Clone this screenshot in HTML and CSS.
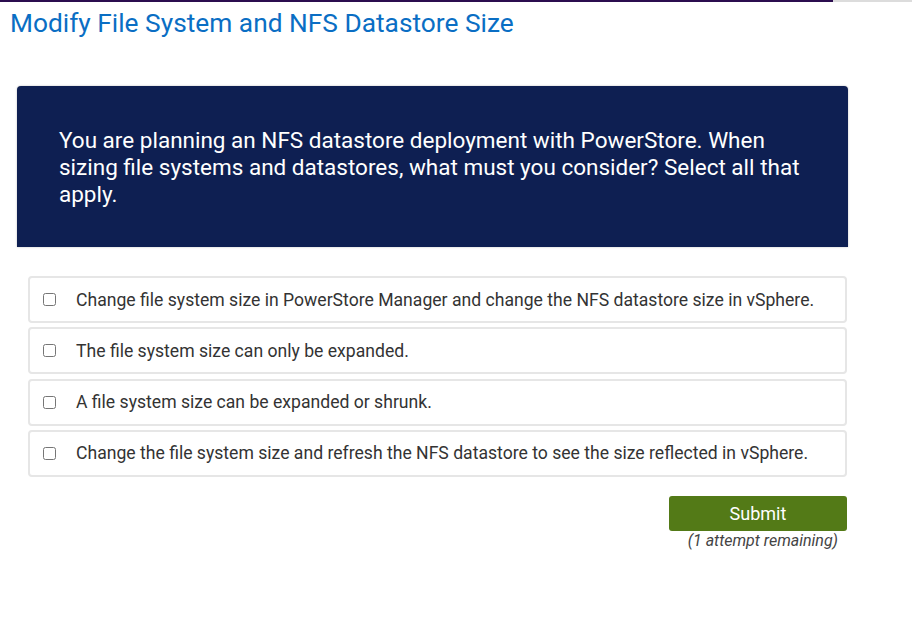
FILE: index.html
```html
<!DOCTYPE html>
<html lang="en">
   <head>
      <meta charset="utf-8" />
      <title>Modify File System and NFS Datastore Size</title>
      <link rel="stylesheet" href="styles.css">
   </head>
   <body>
      <div class="progress"><div class="progress-fill"></div></div>

      <h1 class="title">Modify File System and NFS Datastore Size</h1>

      <div class="question">
         You are planning an NFS datastore deployment with PowerStore. When sizing file systems and datastores, what must you consider? Select all that apply.
      </div>

      <form class="answers">
         <label class="option"><input type="checkbox" name="a1" /><span>Change file system size in PowerStore Manager and change the NFS datastore size in vSphere.</span></label>
         <label class="option"><input type="checkbox" name="a2" /><span>The file system size can only be expanded.</span></label>
         <label class="option"><input type="checkbox" name="a3" /><span>A file system size can be expanded or shrunk.</span></label>
         <label class="option"><input type="checkbox" name="a4" /><span>Change the file system size and refresh the NFS datastore to see the size reflected in vSphere.</span></label>

         <div class="submit-area">
            <button type="submit" class="submit">Submit</button>
            <div class="attempts">(1 attempt remaining)</div>
         </div>
      </form>
   </body>
</html>
```

FILE: styles.css
```css
body {
   margin: 0;
   font-family: Roboto, 'Liberation Sans', sans-serif;
   background-color: #ffffff;
}

.progress {
   height: 2px;
   background-color: #dcdcdc;
}

.progress-fill {
   width: 833px;
   height: 2px;
   background-color: #2b0d4f;
}

.title {
   margin: 6px 0 0 10px;
   font-size: 26.3px;
   font-weight: 400;
   line-height: 30px;
   color: #0a6ec4;
}

.question {
   margin: 48px 0 0 17px;
   width: 831px;
   box-sizing: border-box;
   padding: 41px 42px 39px 42px;
   background-color: #0e1f52;
   border-radius: 4px 4px 0 0;
   box-shadow: 0 0 2px #b5b5b5;
   color: #ffffff;
   font-size: 22.5px;
   line-height: 27px;
}

.answers {
   margin: 29px 0 0 28px;
   width: 819px;
}

.option {
   display: flex;
   align-items: center;
   height: 47px;
   box-sizing: border-box;
   margin-bottom: 4.33px;
   padding-left: 12px;
   border: 2px solid #e6e6e6;
   border-radius: 4px;
   font-size: 17.6px;
   color: #333333;
}

.option input {
   margin: 0 20px 0 1px;
   width: 13px;
   height: 13px;
}

.submit-area {
   display: flex;
   flex-direction: column;
   align-items: flex-end;
   margin-top: 19px;
}

.submit {
   width: 178px;
   height: 35px;
   border: none;
   border-radius: 3px;
   background-color: #537a17;
   color: #ffffff;
   font-family: Roboto, 'Liberation Sans', sans-serif;
   font-size: 18px;
   cursor: pointer;
}

.attempts {
   margin: 0 9px 0 0;
   font-size: 16px;
   font-style: italic;
   color: #444444;
}
```
